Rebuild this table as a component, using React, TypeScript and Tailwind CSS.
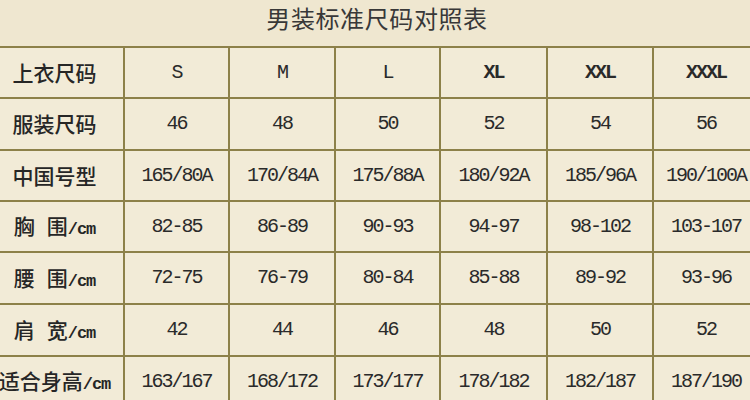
import React from "react";

const sizes = ["S", "M", "L", "XL", "XXL", "XXXL"];

const cm = <span className="font-['Liberation_Mono',monospace] text-[17px] font-bold tracking-[-1px]">/cm</span>;

const rows: { label: React.ReactNode; values: string[] }[] = [
  { label: "服装尺码", values: ["46", "48", "50", "52", "54", "56"] },
  { label: "中国号型", values: ["165/80A", "170/84A", "175/88A", "180/92A", "185/96A", "190/100A"] },
  {
    label: (
      <>
        <span className="mr-[12px]">胸</span>围{cm}
      </>
    ),
    values: ["82-85", "86-89", "90-93", "94-97", "98-102", "103-107"],
  },
  {
    label: (
      <>
        <span className="mr-[12px]">腰</span>围{cm}
      </>
    ),
    values: ["72-75", "76-79", "80-84", "85-88", "89-92", "93-96"],
  },
  {
    label: (
      <>
        <span className="mr-[12px]">肩</span>宽{cm}
      </>
    ),
    values: ["42", "44", "46", "48", "50", "52"],
  },
  {
    label: (
      <>
        适合身高{cm}
      </>
    ),
    values: ["163/167", "168/172", "173/177", "178/182", "182/187", "187/190"],
  },
];

function LabelCell({ children }: { children: React.ReactNode }) {
  return (
    <div className="flex items-center justify-center bg-[#f2ebd7] whitespace-nowrap font-['Noto_Sans_CJK_SC',sans-serif] text-[21px] font-medium text-[#262626]">
      <span>{children}</span>
    </div>
  );
}

function ValueCell({ children, bold }: { children: React.ReactNode; bold?: boolean }) {
  return (
    <div
      className={
        "flex items-center justify-center bg-[#f2ebd7] whitespace-nowrap font-['Liberation_Mono',monospace] text-[20px] tracking-[-2px] text-[#2a2a2a] " +
        (bold ? "font-bold" : "font-normal")
      }
    >
      <span>{children}</span>
    </div>
  );
}

export default function App() {
  return (
    <div className="w-[750px] h-[400px] overflow-hidden bg-[#efe7d0]">
      <div className="h-[46px] flex items-center justify-center pb-[10px] pl-[4px]">
        <span className="font-['Noto_Sans_CJK_SC',sans-serif] text-[24px] leading-[28px] tracking-[0.6px] font-normal text-[#383838]">
          男装标准尺码对照表
        </span>
      </div>
      <div className="ml-[-16px] w-[800px] grid grid-cols-[137px_103px_104px_103px_105px_104px_104px] grid-rows-[49px_50px_49px_49px_50px_50px_49px] gap-[2px] p-[2px] bg-[#8d8149]">
        <LabelCell>上衣尺码</LabelCell>
        {sizes.map((s) => (
          <ValueCell key={s} bold={s.length > 1}>
            {s}
          </ValueCell>
        ))}
        {rows.map((r, i) => (
          <React.Fragment key={i}>
            <LabelCell>{r.label}</LabelCell>
            {r.values.map((v, j) => (
              <ValueCell key={j}>{v}</ValueCell>
            ))}
          </React.Fragment>
        ))}
      </div>
    </div>
  );
}
